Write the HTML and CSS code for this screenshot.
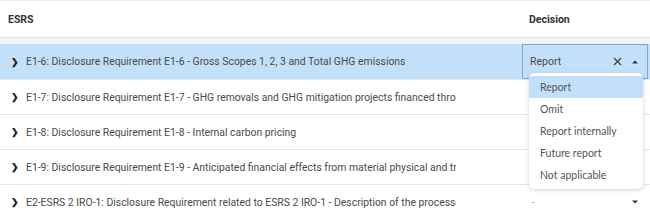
FILE: index.html
```html
<!DOCTYPE html>
<html lang="en">
<head>
    <meta charset="UTF-8">
    <title>ESRS decisions</title>
    <link rel="stylesheet" href="styles.css">
</head>
<body>
    <div class="grid">
        <!-- Header -->
        <div class="row head">
            <div class="cell main"><b>ESRS</b></div>
            <div class="cell decision"><b>Decision</b></div>
        </div>
        <div class="band"></div>

        <!-- Rows -->
        <div class="row selected">
            <div class="cell main"><span class="chev">&#x276F;</span><span class="label">E1-6: Disclosure Requirement E1-6 - Gross Scopes 1, 2, 3 and Total GHG emissions</span></div>
            <div class="cell decision">
                <div class="select open">
                    <span class="value">Report</span>
                    <svg class="clear" width="9" height="9" viewBox="0 0 9 9"><path d="M1 1L8 8M8 1L1 8" stroke="#444" stroke-width="1.4"/></svg>
                    <svg class="caret" width="6" height="4" viewBox="0 0 6 4"><path d="M0 3.5L3 0.5L6 3.5Z" fill="#333"/></svg>
                    <ul class="menu">
                        <li class="active">Report</li>
                        <li>Omit</li>
                        <li>Report internally</li>
                        <li>Future report</li>
                        <li>Not applicable</li>
                    </ul>
                </div>
            </div>
        </div>
        <div class="row">
            <div class="cell main"><span class="chev">&#x276F;</span><span class="label">E1-7: Disclosure Requirement E1-7 - GHG removals and GHG mitigation projects financed through carbon credits</span></div>
            <div class="cell decision"></div>
        </div>
        <div class="row">
            <div class="cell main"><span class="chev">&#x276F;</span><span class="label">E1-8: Disclosure Requirement E1-8 - Internal carbon pricing</span></div>
            <div class="cell decision"></div>
        </div>
        <div class="row">
            <div class="cell main"><span class="chev">&#x276F;</span><span class="label">E1-9: Disclosure Requirement E1-9 - Anticipated financial effects from material physical and transition risks</span></div>
            <div class="cell decision"></div>
        </div>
        <div class="row">
            <div class="cell main"><span class="chev">&#x276F;</span><span class="label">E2-ESRS 2 IRO-1: Disclosure Requirement related to ESRS 2 IRO-1 - Description of the processes to identify and assess material impacts</span></div>
            <div class="cell decision">
                <div class="select">
                    <span class="value empty">-</span>
                    <svg class="caret" width="6" height="4" viewBox="0 0 6 4"><path d="M0 0.5L3 3.5L6 0.5Z" fill="#333"/></svg>
                </div>
            </div>
        </div>
    </div>
</body>
</html>
```

FILE: styles.css
```css
/* Page */
body {
    margin: 0;
    background-color: #fff;
    font-family: 'Roboto', 'Liberation Sans', sans-serif;
    font-size: 10.5px;
    color: #4a4a4a;
}

/* Table wrapper */
.grid {
    width: 650px;
    border-top: 1px solid #ececec;
    box-sizing: border-box;
}

.row {
    display: flex;
    height: 35px;
    border-bottom: 1px solid #e6e6e6;
    box-sizing: border-box;
}

.cell {
    display: flex;
    align-items: center;
    box-sizing: border-box;
}

.cell.main {
    width: 522px;
    padding: 0 66px 0 11px;
    white-space: nowrap;
}

.cell.main .label {
    flex: 1;
    min-width: 0;
    overflow: hidden;
    font-size: 10.4px;
}

.cell.decision {
    width: 128px;
    padding-right: 2px;
}

/* Header */
.row.head {
    height: 36px;
    border-bottom: none;
}
.row.head b {
    color: #333;
    font-weight: 700;
}
.row.head .main {
    padding-left: 8px;
}
.row.head .decision {
    padding-left: 7px;
}

.band {
    height: 7px;
    background-color: #f4f4f4;
    border-top: 1px solid #e4e4e4;
    box-sizing: border-box;
}

/* Rows */
.chev {
    width: 15px;
    font-size: 9px;
    font-weight: bold;
    color: #222;
    flex-shrink: 0;
}

.row.selected {
    height: 36px;
    background-color: #c3e0fb;
}

/* Select control */
.select {
    position: relative;
    flex: 1;
    align-self: stretch;
    display: flex;
    align-items: center;
    padding: 0 9px 0 7px;
    border: 1px solid transparent;
}
.select.open {
    border-color: #7aa7d8;
}
.select .value {
    flex: 1;
}
.select .value.empty {
    color: #aaa;
    padding-left: 2px;
}
.select .clear {
    margin-right: 10px;
}

/* Dropdown menu */
.menu {
    position: absolute;
    top: 28px;
    left: 6px;
    width: 114px;
    margin: 0;
    padding: 3px 0;
    list-style: none;
    background-color: #fff;
    border-radius: 5px;
    box-shadow: 0 1px 4px rgba(0, 0, 0, 0.18);
    font-family: 'Lato', sans-serif;
    font-size: 10.5px;
    color: #555;
    z-index: 2;
}
.menu li {
    height: 22px;
    line-height: 22px;
    padding-left: 11px;
}
.menu li.active {
    background-color: #c3e0fb;
}
```
